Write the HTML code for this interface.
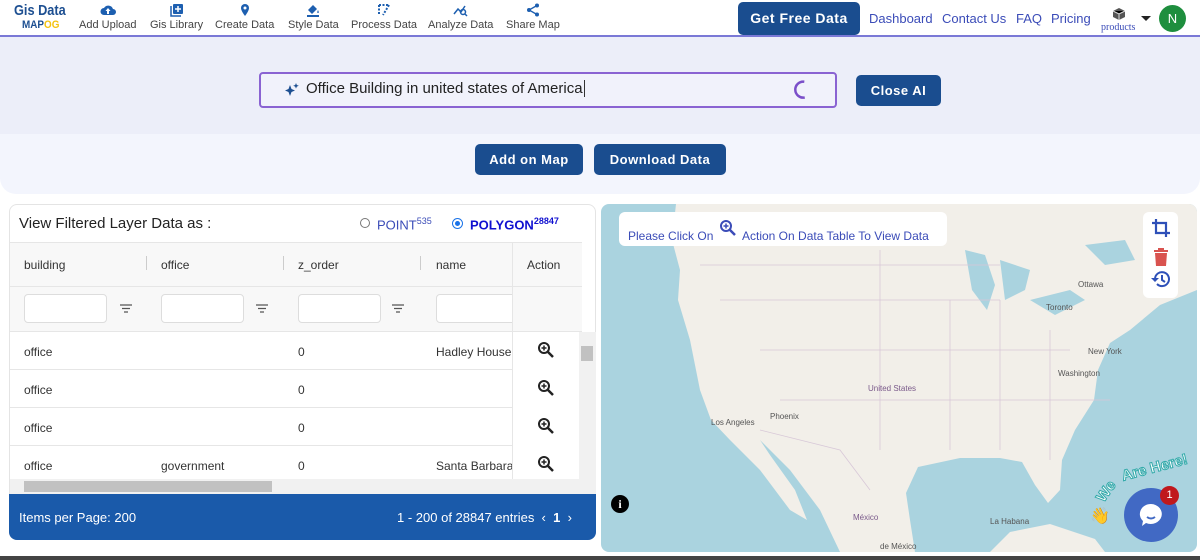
<!DOCTYPE html>
<html><head><meta charset="utf-8"><style>
*{box-sizing:border-box;margin:0;padding:0}
html,body{width:1200px;height:560px;overflow:hidden}
body{background:#fff;font-family:"Liberation Sans",sans-serif;position:relative;color:#333}
.a{position:absolute}
.nav{top:0;left:0;width:1200px;height:37px;background:#fff;border-bottom:2px solid #7a78d6}
.ni{position:absolute;top:3px;text-align:center;font-size:11px;color:#444}
.ni svg{display:block;margin:0 auto 2px}
.btn{position:absolute;background:#1a4d8f;color:#fff;border-radius:5px;font-size:13px;letter-spacing:.5px;text-align:center;font-weight:bold}
.lnk{position:absolute;top:11px;font-size:13px;color:#3b4cb8}
.row{position:absolute;left:10px;width:570px;height:38px;border-bottom:1px solid #e6e6e6;font-size:12px;background:#fff}
.row span{position:absolute;top:13px}
.fin{position:absolute;top:8px;width:83px;height:29px;border:1px solid #ddd;border-radius:4px;background:#fff}
.lb{position:absolute;font-size:8px;color:#555}
</style></head><body>
<div class="a" style="top:37px;left:0;width:1200px;height:157px;background:#f3f5fd;border-radius:0 0 16px 16px"></div>
<div class="a" style="top:37px;left:0;width:1200px;height:97px;background:#eceef9"></div>
<div class="a nav"></div>
<div class="a" style="left:14px;top:4px;font-weight:bold;font-size:15px;color:#1d4f91;line-height:14px;transform:scaleX(.85);transform-origin:left">Gis Data</div>
<div class="a" style="left:22px;top:19px;font-weight:bold;font-size:11px;color:#1d4f91;transform:scaleX(.9);transform-origin:left">MAP<span style="color:#f4c20d">OG</span></div>
<div class="ni" style="left:79px"><svg width="16" height="14" viewBox="0 0 16 14"><path d="M4 12h9a3 3 0 0 0 0-6 5 5 0 0 0-9-1A3.5 3.5 0 0 0 4 12z" fill="#1d5fb0"/><path d="M8 5l-2.5 3H7v3h2V8h1.5z" fill="#fff"/></svg>Add Upload</div>
<div class="ni" style="left:150px"><svg width="14" height="14" viewBox="0 0 14 14"><rect x="3" y="1" width="10" height="10" rx="1" fill="#1d5fb0"/><path d="M1 3v10h10" stroke="#1d5fb0" fill="none" stroke-width="1.5"/><path d="M8 3v6M5 6h6" stroke="#fff" stroke-width="1.5"/></svg>Gis Library</div>
<div class="ni" style="left:215px"><svg width="12" height="14" viewBox="0 0 12 14"><path d="M6 1a4 4 0 0 0-4 4c0 3 4 8 4 8s4-5 4-8a4 4 0 0 0-4-4z" fill="#1d5fb0"/><circle cx="6" cy="5" r="1.5" fill="#fff"/></svg>Create Data</div>
<div class="ni" style="left:288px"><svg width="16" height="14" viewBox="0 0 16 14"><path d="M3 7l5-5 4 4-5 5z" fill="#1d5fb0"/><path d="M13 7c1 2 1 3 0 3s-1-1 0-3z" fill="#1d5fb0"/><rect x="2" y="12" width="12" height="2" fill="#1d5fb0"/></svg>Style Data</div>
<div class="ni" style="left:351px"><svg width="14" height="14" viewBox="0 0 14 14"><path d="M2 2h10M2 2v10M12 2l-6 10" stroke="#1d5fb0" stroke-width="2" fill="none" stroke-dasharray="2 1.5"/></svg>Process Data</div>
<div class="ni" style="left:428px"><svg width="16" height="14" viewBox="0 0 16 14"><path d="M1 11l4-5 3 3 4-6" stroke="#1d5fb0" stroke-width="1.5" fill="none"/><circle cx="10" cy="9" r="2.5" stroke="#1d5fb0" fill="none" stroke-width="1.5"/><path d="M12 11l2 2" stroke="#1d5fb0" stroke-width="1.5"/></svg>Analyze Data</div>
<div class="ni" style="left:506px"><svg width="14" height="14" viewBox="0 0 14 14"><circle cx="11" cy="2.5" r="2" fill="#1d5fb0"/><circle cx="3" cy="7" r="2" fill="#1d5fb0"/><circle cx="11" cy="11.5" r="2" fill="#1d5fb0"/><path d="M11 2.5L3 7l8 4.5" stroke="#1d5fb0" stroke-width="1.3" fill="none"/></svg>Share Map</div>
<div class="btn" style="left:738px;top:2px;width:122px;height:33px;line-height:33px;font-size:14px">Get Free Data</div>
<div class="lnk" style="left:869px">Dashboard</div>
<div class="lnk" style="left:942px">Contact Us</div>
<div class="lnk" style="left:1016px">FAQ</div>
<div class="lnk" style="left:1051px">Pricing</div>
<svg class="a" style="left:1112px;top:7px" width="14" height="14" viewBox="0 0 14 14"><path d="M7 1l6 3v6l-6 3-6-3V4z" fill="#555"/><path d="M1 4l6 3 6-3M7 7v6" stroke="#ddd" stroke-width="1"/></svg>
<div class="a" style="left:1101px;top:22px;font-family:'Liberation Serif',serif;font-size:10px;color:#3b4cb8">products</div>
<div class="a" style="left:1141px;top:16px;border:5px solid transparent;border-top:5px solid #222"></div>
<div class="a" style="left:1159px;top:5px;width:27px;height:27px;border-radius:50%;background:#1e8e3e;color:#fff;font-size:13px;text-align:center;line-height:27px">N</div>

<div class="a" style="left:259px;top:72px;width:578px;height:36px;border:2px solid #8a63d2;border-radius:4px;background:#f1f2fb"></div>
<svg class="a" style="left:284px;top:82px" width="16" height="15" viewBox="0 0 16 15"><path d="M6 3l1.5 4L11 8.5 7.5 10 6 14 4.5 10 1 8.5 4.5 7z" fill="#1d4f91"/><path d="M12 1l.8 2 2 .8-2 .8-.8 2-.8-2-2-.8 2-.8z" fill="#1d4f91"/></svg>
<div class="a" style="left:306px;top:80px;font-size:15px;color:#222">Office Building in united states of America<span style="border-left:1px solid #333;margin-left:1px"></span></div>
<svg class="a" style="left:791px;top:79px" width="22" height="22" viewBox="0 0 22 22"><path d="M16 4A8 8 0 1 0 11 19" stroke="#7b4fc9" stroke-width="2.5" fill="none" transform="rotate(-20 11 11)"/></svg>
<div class="btn" style="left:856px;top:75px;width:85px;height:31px;line-height:31px">Close AI</div>
<div class="btn" style="left:475px;top:144px;width:108px;height:31px;line-height:31px">Add on Map</div>
<div class="btn" style="left:594px;top:144px;width:132px;height:31px;line-height:31px">Download Data</div>

<div class="a" style="left:9px;top:204px;width:587px;height:336px;border:1px solid #e4e4e4;border-radius:8px;background:#fff"></div>
<div class="a" style="left:19px;top:215px;font-size:15px;color:#222">View Filtered Layer Data as :</div>
<div class="a" style="left:360px;top:218px;width:10px;height:10px;border:1px solid #777;border-radius:50%"></div>
<div class="a" style="left:377px;top:216px;font-size:13px;color:#3b4cb8">POINT<sup style="font-size:9px">535</sup></div>
<div class="a" style="left:452px;top:218px;width:11px;height:11px;border:1px solid #1a73e8;border-radius:50%"><div style="margin:2px;width:5px;height:5px;border-radius:50%;background:#1a73e8"></div></div>
<div class="a" style="left:470px;top:216px;font-size:13px;color:#1010d0;font-weight:bold">POLYGON<sup style="font-size:9px">28847</sup></div>
<div class="a" style="left:10px;top:242px;width:572px;height:90px;background:#f8f8f8;border-top:1px solid #e6e6e6;border-bottom:1px solid #e6e6e6"></div>
<div class="a" style="left:10px;top:286px;width:572px;height:1px;background:#e6e6e6"></div>
<div class="a" style="left:512px;top:242px;width:1px;height:240px;background:#e6e6e6"></div>
<div class="a" style="left:24px;top:258px;font-size:12px">building</div><div class="a" style="left:146px;top:256px;width:1px;height:14px;background:#ccc"></div>
<div class="a" style="left:161px;top:258px;font-size:12px">office</div><div class="a" style="left:283px;top:256px;width:1px;height:14px;background:#ccc"></div>
<div class="a" style="left:298px;top:258px;font-size:12px">z_order</div><div class="a" style="left:420px;top:256px;width:1px;height:14px;background:#ccc"></div>
<div class="a" style="left:436px;top:258px;font-size:12px">name</div>
<div class="a" style="left:527px;top:258px;font-size:12px">Action</div>
<div class="a" style="left:10px;top:286px;width:502px;height:45px;overflow:hidden">
<div class="fin" style="left:14px"></div><div class="fin" style="left:151px"></div><div class="fin" style="left:288px"></div><div class="fin" style="left:426px;width:80px"></div>
<svg class="a" style="left:110px;top:18px" width="12" height="9"><path d="M0 1h12M2 4.5h8M4 8h4" stroke="#555" stroke-width="1.3"/></svg>
<svg class="a" style="left:246px;top:18px" width="12" height="9"><path d="M0 1h12M2 4.5h8M4 8h4" stroke="#555" stroke-width="1.3"/></svg>
<svg class="a" style="left:382px;top:18px" width="12" height="9"><path d="M0 1h12M2 4.5h8M4 8h4" stroke="#555" stroke-width="1.3"/></svg>
</div>
<div class="row" style="top:332px"><span style="left:14px">office</span><span style="left:288px">0</span><span style="left:426px">Hadley House</span></div>
<div class="row" style="top:370px"><span style="left:14px">office</span><span style="left:288px">0</span></div>
<div class="row" style="top:408px"><span style="left:14px">office</span><span style="left:288px">0</span></div>
<div class="row" style="top:446px;height:35px"><span style="left:14px">office</span><span style="left:151px">government</span><span style="left:288px">0</span><span style="left:426px">Santa Barbara</span></div>
<div class="a" style="left:512px;top:332px;width:67px;height:147px;background:#fff;border-left:1px solid #e6e6e6"></div>
<svg class="a" style="left:537px;top:341px" width="18" height="18" viewBox="0 0 18 18"><circle cx="7" cy="7" r="5" stroke="#222" stroke-width="2" fill="none"/><path d="M11 11l5 5" stroke="#222" stroke-width="2.5"/><path d="M7 4.5v5M4.5 7h5" stroke="#222" stroke-width="1.5"/></svg>
<svg class="a" style="left:537px;top:379px" width="18" height="18" viewBox="0 0 18 18"><circle cx="7" cy="7" r="5" stroke="#222" stroke-width="2" fill="none"/><path d="M11 11l5 5" stroke="#222" stroke-width="2.5"/><path d="M7 4.5v5M4.5 7h5" stroke="#222" stroke-width="1.5"/></svg>
<svg class="a" style="left:537px;top:417px" width="18" height="18" viewBox="0 0 18 18"><circle cx="7" cy="7" r="5" stroke="#222" stroke-width="2" fill="none"/><path d="M11 11l5 5" stroke="#222" stroke-width="2.5"/><path d="M7 4.5v5M4.5 7h5" stroke="#222" stroke-width="1.5"/></svg>
<svg class="a" style="left:537px;top:455px" width="18" height="18" viewBox="0 0 18 18"><circle cx="7" cy="7" r="5" stroke="#222" stroke-width="2" fill="none"/><path d="M11 11l5 5" stroke="#222" stroke-width="2.5"/><path d="M7 4.5v5M4.5 7h5" stroke="#222" stroke-width="1.5"/></svg>
<div class="a" style="left:579px;top:332px;width:17px;height:150px;background:#f1f1f1"></div>
<div class="a" style="left:581px;top:346px;width:12px;height:15px;background:#c1c1c1"></div>
<div class="a" style="left:10px;top:479px;width:586px;height:15px;background:#f1f1f1"></div>
<div class="a" style="left:24px;top:481px;width:248px;height:11px;background:#c1c1c1"></div>
<div class="a" style="left:9px;top:494px;width:587px;height:46px;background:#1a5aaa;border-radius:0 0 8px 8px;color:#fff;font-size:13px">
<span class="a" style="left:10px;top:16px">Items per Page: 200</span>
<span class="a" style="left:388px;top:16px">1 - 200 of 28847 entries &nbsp;‹ &nbsp;<b>1</b>&nbsp; ›</span></div>

<div class="a" style="left:601px;top:204px;width:596px;height:348px;border-radius:8px;overflow:hidden;background:#aad3df">
<svg width="596" height="348" viewBox="601 204 596 348" style="position:absolute;left:0;top:0">
<path d="M676 204L672 240 680 270 678 300 690 340 700 390 711 420 730 440 760 470 790 510 807 520 795 490 770 455 760 440 790 470 820 510 840 552 915 552 910 520 906 493 918 467 960 458 1000 458 1022 462 1035 485 1048 503 1060 490 1062 460 1075 430 1094 400 1098 370 1110 343 1130 330 1160 305 1197 290 1197 204z" fill="#f2efe9"/>
<path d="M965 250l20 5 10 30-8 25-15-20zM1000 260l30 10-5 20-20 10zM1030 300l40-10 15 10-30 15zM1085 245l40-5 10 20-30 5z" fill="#aad3df"/>
<path d="M990 552l20-20 40-8 45 15 10 13z" fill="#f2efe9"/>
<g stroke="#d8c8d8" stroke-width=".8" fill="none"><path d="M700 265h300M720 300h280M760 350h310M780 400h330M880 250v200M950 300v150M1000 300v150M1050 330v130M760 430l80 20 30 40"/></g>
</svg>
<div class="a" style="left:18px;top:8px;width:328px;height:34px;background:#fff;border-radius:6px;font-size:12px;color:#3b4cb8">
<span class="a" style="left:9px;top:17px">Please Click On</span>
<svg class="a" style="left:100px;top:7px" width="18" height="18" viewBox="0 0 18 18"><circle cx="7" cy="7" r="5" stroke="#3b4cb8" stroke-width="2" fill="none"/><path d="M11 11l5 5" stroke="#3b4cb8" stroke-width="2.5"/><path d="M7 4.5v5M4.5 7h5" stroke="#3b4cb8" stroke-width="1.5"/></svg>
<span class="a" style="left:123px;top:17px">Action On Data Table To View Data</span></div>
<div class="a" style="left:542px;top:8px;width:35px;height:86px;background:#fff;border-radius:6px"></div>
<svg class="a" style="left:549px;top:13px" width="22" height="22" viewBox="0 0 22 22"><path d="M6 2v14h14M2 6h14v14" stroke="#2e50b8" stroke-width="2.2" fill="none"/></svg>
<svg class="a" style="left:552px;top:44px" width="16" height="18" viewBox="0 0 16 18"><rect x="1" y="2" width="14" height="2" fill="#d9534f"/><rect x="5" y="0" width="6" height="3" fill="#d9534f"/><path d="M2 5h12l-1 13H3z" fill="#d9534f"/></svg>
<svg class="a" style="left:549px;top:65px" width="22" height="20" viewBox="0 0 22 20"><path d="M5 10a7 7 0 1 1 2 5" stroke="#2e50b8" stroke-width="2" fill="none"/><path d="M1 9l4 4 4-4z" fill="#2e50b8"/><path d="M12 6v5l3 2" stroke="#2e50b8" stroke-width="2" fill="none"/></svg>
<div class="a" style="left:10px;top:291px;width:18px;height:18px;border-radius:50%;background:#000;color:#fff;font-size:12px;font-weight:bold;text-align:center;line-height:18px;font-family:'Liberation Serif',serif">i</div>
<div class="lb" style="left:477px;top:76px">Ottawa</div>
<div class="lb" style="left:445px;top:99px">Toronto</div>
<div class="lb" style="left:487px;top:143px">New York</div>
<div class="lb" style="left:457px;top:165px">Washington</div>
<div class="lb" style="left:267px;top:180px;color:#7a5a8a">United States</div>
<div class="lb" style="left:169px;top:208px">Phoenix</div>
<div class="lb" style="left:110px;top:214px">Los Angeles</div>
<div class="lb" style="left:252px;top:309px;color:#7a5a8a">México</div>
<div class="lb" style="left:389px;top:313px">La Habana</div>
<div class="lb" style="left:279px;top:338px">de México</div>
</div>
<div class="a" style="left:1100px;top:492px;font-size:15px;font-weight:bold;color:#fff;transform:rotate(-55deg);transform-origin:left;-webkit-text-stroke:1px #3aa">We</div>
<div class="a" style="left:1122px;top:468px;font-size:15px;font-weight:bold;color:#fff;transform:rotate(-15deg);transform-origin:left;-webkit-text-stroke:1px #3aa">Are Here!</div>
<div class="a" style="left:1124px;top:488px;width:54px;height:54px;border-radius:50%;background:#4169c4"></div>
<svg class="a" style="left:1138px;top:502px" width="26" height="26" viewBox="0 0 26 26"><path d="M13 2a11 10 0 1 1-5 19l-4 3 1-5A11 10 0 0 1 13 2z" fill="#fff"/><path d="M9 15q4 3 8 0" stroke="#4169c4" stroke-width="2" fill="none"/></svg>
<div class="a" style="left:1160px;top:486px;width:19px;height:19px;border-radius:50%;background:#c0181c;color:#fff;font-size:11px;text-align:center;line-height:19px">1</div>
<div class="a" style="left:1090px;top:508px;font-size:16px;line-height:18px">👋</div>
<div class="a" style="left:0;top:556px;width:1200px;height:4px;background:#444"></div>
</body></html>
